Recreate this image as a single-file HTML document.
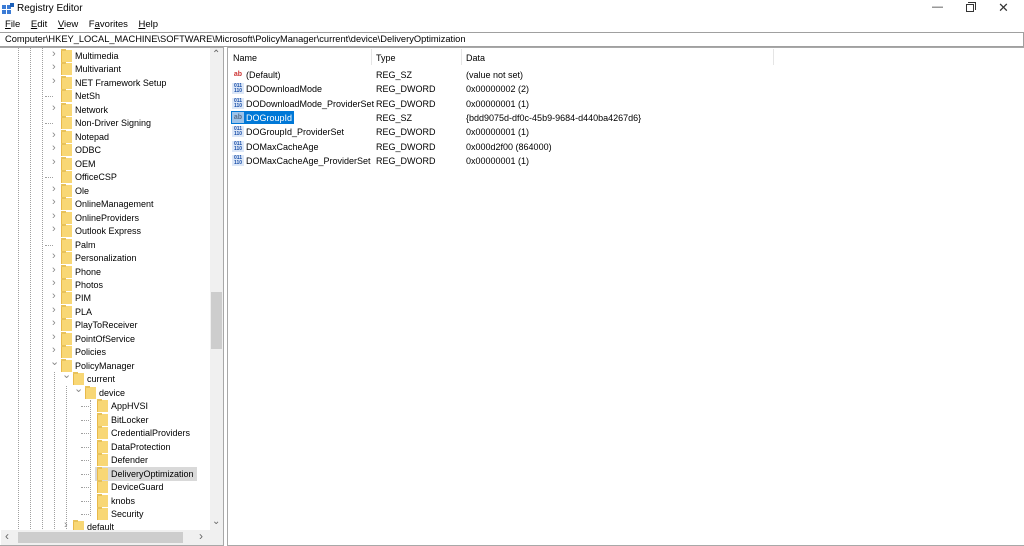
<!DOCTYPE html>
<html><head><meta charset="utf-8"><style>
*{margin:0;padding:0;box-sizing:border-box}
body{width:1024px;height:546px;background:#fff;font-family:"Liberation Sans",sans-serif;font-size:9px;color:#000;position:relative;overflow:hidden}
.a{position:absolute;white-space:nowrap}
.f{position:absolute;width:11px;height:12px;background:#f8d775;border-left:1px solid #e8b94a}
.f:before{content:"";position:absolute;left:-1px;top:-1px;width:5px;height:2px;background:#e8c25a}
.vl{position:absolute;border-left:1px dotted #a0a0a0}
.hl{position:absolute;border-top:1px dotted #a0a0a0;width:8px}
.ch{position:absolute;color:#888;font-size:11px}
.ic{position:absolute;width:12px;height:11px;font-size:7px;line-height:11px;text-align:center;font-weight:bold}
.sz{color:#c33}
.dw{color:#1a4fa8;background:#dde8f8;font-size:5px;line-height:5px;padding-top:1px}
</style></head><body>
<svg class="a" style="left:2px;top:3px" width="12" height="12"><rect x="0" y="2" width="4" height="4" fill="#3a7bd5"/><rect x="5" y="2" width="4" height="4" fill="#3a7bd5"/><rect x="0" y="7" width="4" height="4" fill="#3a7bd5"/><rect x="5" y="7" width="4" height="4" fill="#3a7bd5"/><rect x="8" y="0" width="4" height="4" fill="#1c5fb8"/></svg>
<div class="a" style="left:17px;top:3px;font-size:10px">Registry Editor</div>
<div class="a" style="left:932px;top:1px;font-size:11px;color:#333">&#8212;</div>
<div class="a" style="left:966px;top:4px;width:8px;height:8px;border:1px solid #333"></div>
<div class="a" style="left:968px;top:2px;width:8px;height:8px;border-top:1px solid #333;border-right:1px solid #333"></div>
<div class="a" style="left:998px;top:0px;font-size:13px;color:#333">&#10005;</div>
<div class="a" style="left:5px;top:19px;font-size:9.5px"><u>F</u>ile&nbsp;&nbsp;&nbsp;&nbsp;<u>E</u>dit&nbsp;&nbsp;&nbsp;&nbsp;<u>V</u>iew&nbsp;&nbsp;&nbsp;&nbsp;F<u>a</u>vorites&nbsp;&nbsp;&nbsp;&nbsp;<u>H</u>elp</div>
<div class="a" style="left:0;top:32px;width:1024px;height:15px;border:1px solid #a0a0a0;border-left:none"></div>
<div class="a" style="left:5px;top:34px;font-size:9.3px">Computer\HKEY_LOCAL_MACHINE\SOFTWARE\Microsoft\PolicyManager\current\device\DeliveryOptimization</div>
<div class="a" style="left:0;top:47px;width:224px;height:499px;border:1px solid #a8a8a8;border-left:none"></div>
<div class="vl" style="left:18px;top:48px;height:481px"></div>
<div class="vl" style="left:30px;top:48px;height:481px"></div>
<div class="vl" style="left:42px;top:48px;height:481px"></div>
<div class="vl" style="left:54px;top:372px;height:157px"></div>
<div class="vl" style="left:66px;top:386px;height:143px"></div>
<div class="vl" style="left:90px;top:400px;height:116px"></div>
<div id="tree"></div>
<div class="a" style="left:210px;top:48px;width:13px;height:482px;background:#f0f0f0"></div>
<div class="a" style="left:211px;top:292px;width:11px;height:57px;background:#cdcdcd"></div>
<div class="a" style="left:212px;top:49px;font-size:10px;color:#666">&#8963;</div>
<div class="a" style="left:212px;top:516px;font-size:10px;color:#666">&#8964;</div>
<div class="a" style="left:1px;top:530px;width:222px;height:15px;background:#f0f0f0"></div>
<div class="a" style="left:18px;top:532px;width:165px;height:11px;background:#cdcdcd"></div>
<div class="a" style="left:5px;top:529px;font-size:12px;color:#666">&lsaquo;</div>
<div class="a" style="left:199px;top:529px;font-size:12px;color:#666">&rsaquo;</div>
<div class="a" style="left:227px;top:47px;width:797px;height:499px;border:1px solid #a8a8a8;border-right:none"></div>
<div class="a" style="left:371px;top:49px;height:16px;border-left:1px solid #e5e5e5"></div>
<div class="a" style="left:461px;top:49px;height:16px;border-left:1px solid #e5e5e5"></div>
<div class="a" style="left:773px;top:49px;height:16px;border-left:1px solid #e5e5e5"></div>
<div class="a" style="left:233px;top:53px">Name</div>
<div class="a" style="left:376px;top:53px">Type</div>
<div class="a" style="left:466px;top:53px">Data</div>
<div id="vals"></div>
<script>
var t=[["Multimedia",1,">"],["Multivariant",1,">"],["NET Framework Setup",1,">"],["NetSh",1,"-"],["Network",1,">"],["Non-Driver Signing",1,"-"],["Notepad",1,">"],["ODBC",1,">"],["OEM",1,">"],["OfficeCSP",1,"-"],["Ole",1,">"],["OnlineManagement",1,">"],["OnlineProviders",1,">"],["Outlook Express",1,">"],["Palm",1,"-"],["Personalization",1,">"],["Phone",1,">"],["Photos",1,">"],["PIM",1,">"],["PLA",1,">"],["PlayToReceiver",1,">"],["PointOfService",1,">"],["Policies",1,">"],["PolicyManager",1,"v"],["current",2,"v"],["device",3,"v"],["AppHVSI",4,"-"],["BitLocker",4,"-"],["CredentialProviders",4,"-"],["DataProtection",4,"-"],["Defender",4,"-"],["DeliveryOptimization",4,"-"],["DeviceGuard",4,"-"],["knobs",4,"-"],["Security",4,"-"],["default",2,">"]];
var h="";t.forEach(function(r,i){var y=50+i*13.47,fx=49+r[1]*12,cx=fx-10;
if(r[0]=="DeliveryOptimization")h+='<div class="a" style="left:'+(fx-2)+'px;top:'+(y-1)+'px;width:102px;height:14px;background:#d9d9d9"></div>';
if(r[2]==">")h+='<div class="ch" style="left:'+(cx+1)+'px;top:'+(y-2)+'px">&rsaquo;</div>';
else if(r[2]=="v")h+='<div class="ch" style="left:'+(cx-1)+'px;top:'+(y-5)+'px">&#8964;</div>';
else h+='<div class="hl" style="left:'+(cx-6)+'px;top:'+(y+6)+'px"></div>';
h+='<div class="f" style="left:'+fx+'px;top:'+y+'px"></div><div class="a" style="left:'+(fx+14)+'px;top:'+(y+1)+'px">'+r[0]+'</div>';});
document.getElementById("tree").innerHTML=h;
var v=[["(Default)","REG_SZ","(value not set)",1],["DODownloadMode","REG_DWORD","0x00000002 (2)",0],["DODownloadMode_ProviderSet","REG_DWORD","0x00000001 (1)",0],["DOGroupId","REG_SZ","{bdd9075d-df0c-45b9-9684-d440ba4267d6}",1],["DOGroupId_ProviderSet","REG_DWORD","0x00000001 (1)",0],["DOMaxCacheAge","REG_DWORD","0x000d2f00 (864000)",0],["DOMaxCacheAge_ProviderSet","REG_DWORD","0x00000001 (1)",0]];
h="";v.forEach(function(r,i){var y=69+i*14.3;
if(i==3)h+='<div class="a" style="left:231px;top:'+(y-1)+'px;width:63px;height:13px;background:#0078d7"></div>';
h+=r[3]?'<div class="ic sz" style="left:232px;top:'+y+'px;'+(i==3?'background:#9cc3ea;color:#5a6f8a':'')+'">ab</div>':'<div class="ic dw" style="left:232px;top:'+y+'px">011<br>110</div>';
h+='<div class="a" style="left:246px;top:'+(y+1)+'px;'+(i==3?'color:#fff':'')+'">'+r[0]+'</div><div class="a" style="left:376px;top:'+(y+1)+'px">'+r[1]+'</div><div class="a" style="left:466px;top:'+(y+1)+'px">'+r[2]+'</div>';});
document.getElementById("vals").innerHTML=h;
</script>
</body></html>
